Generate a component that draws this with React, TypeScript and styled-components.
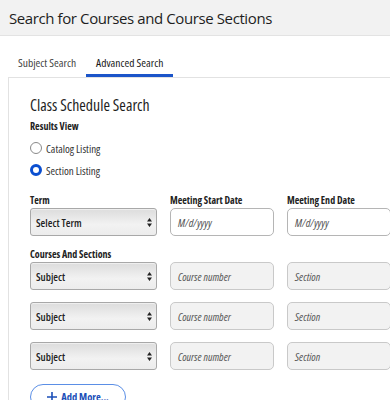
import styled, { createGlobalStyle } from "styled-components";

const GlobalStyle = createGlobalStyle`
  html, body {
    margin: 0;
    padding: 0;
    background: #fff;
    overflow: hidden;
  }
  body {
    font-family: "Open Sans", "Noto Sans", Arial, sans-serif;
    font-stretch: 87.5%;
    color: #222;
  }
`;

const Page = styled.div`
  width: 390px;
  height: 400px;
  overflow: hidden;
`;

const Header = styled.header`
  height: 35px;
  background: #f2f2f2;
  border-bottom: 1px solid #e3e3e3;
  display: flex;
  align-items: center;
  padding-left: 9px;
`;

const Title = styled.h1`
  margin: 0;
  font-size: 15px;
  font-stretch: 100%;
  letter-spacing: -0.4px;
  font-weight: 400;
  color: #1e1e1e;
`;

const TabBar = styled.nav`
  display: flex;
  margin-top: 14px;
  padding-left: 8px;
`;

const Tab = styled.div<{ $active?: boolean }>`
  padding: 0 10px;
  display: flex;
  align-items: center;
  font-size: 11.5px;
  color: ${(p) => (p.$active ? "#1a1a1a" : "#444")};
  border-bottom: 3px solid ${(p) => (p.$active ? "#1b55c9" : "transparent")};
  box-sizing: border-box;
  height: 27px;
`;

const Panel = styled.section`
  margin-left: 8px;
  border-left: 1px solid #e2e2e2;
  border-top: 1px solid #e2e2e2;
  padding: 16px 0 0 21px;
`;

const PanelTitle = styled.h2`
  margin: 0;
  font-size: 15.8px;
  font-weight: 400;
  line-height: 22px;
  color: #1e1e1e;
`;

const Label = styled.div`
  font-size: 10px;
  font-weight: 700;
  color: #222;
  line-height: 12px;
`;

const ResultsLabel = styled(Label)`
  margin-top: 4px;
`;

const RadioGroup = styled.div`
  margin-top: 5px;
  display: flex;
  flex-direction: column;
`;

const RadioRow = styled.label`
  display: flex;
  align-items: center;
  gap: 4px;
  height: 22px;
  font-size: 11px;
  color: #333;
`;

const Radio = styled.span<{ $checked?: boolean }>`
  width: 12px;
  height: 12px;
  border-radius: 50%;
  box-sizing: border-box;
  background: #fff;
  border: ${(p) => (p.$checked ? "3.5px solid #0b4fd0" : "1px solid #8a8a8a")};
`;

const Grid = styled.div`
  display: grid;
  grid-template-columns: 127px 104px 104px;
  column-gap: 13px;
`;

const FieldGroup = styled.div<{ $gap: number }>`
  margin-top: ${(p) => p.$gap}px;
`;

const HeadRow = styled(Grid)`
  height: 12px;
  align-items: center;
`;

const Rows = styled.div`
  display: flex;
  flex-direction: column;
  gap: 12px;
  margin-top: 2px;
`;

const Select = styled.div`
  height: 28px;
  box-sizing: border-box;
  border: 1px solid #a8a8a8;
  border-radius: 3px;
  background: linear-gradient(#dcdcdc, #f2f2f2 60%, #ececec);
  box-shadow: inset 0 1px 1px rgba(255, 255, 255, 0.6);
  display: flex;
  align-items: center;
  justify-content: space-between;
  padding: 0 4px 0 5px;
  font-size: 10.8px;
  font-weight: 600;
  color: #222;
`;

const Input = styled.div<{ $filled?: boolean }>`
  height: 28px;
  box-sizing: border-box;
  border: 1px solid ${(p) => (p.$filled ? "#c9c9c9" : "#b5b5b5")};
  border-radius: 5px;
  background: ${(p) => (p.$filled ? "#f2f2f2" : "#fff")};
  display: flex;
  align-items: center;
  padding-left: 7px;
  font-size: 11px;
  font-style: italic;
  color: #555;
`;

const AddButton = styled.button`
  margin-top: 14px;
  width: 96px;
  height: 26px;
  border: 1px solid #5b8fe6;
  border-radius: 13px;
  background: #fff;
  color: #1b4fb8;
  font-family: inherit;
  font-stretch: inherit;
  font-size: 10.5px;
  font-weight: 700;
  display: flex;
  align-items: center;
  justify-content: center;
  gap: 4px;
  padding: 0;
`;

const Arrows = () => (
  <svg width="5" height="9" viewBox="0 0 5 9">
    <path d="M2.5 0 L5 3.5 H0 Z M2.5 9 L5 5.5 H0 Z" fill="#222" />
  </svg>
);

const Plus = () => (
  <svg width="10" height="10" viewBox="0 0 10 10">
    <path d="M5 0 V10 M0 5 H10" stroke="#1b4fb8" strokeWidth="1.6" />
  </svg>
);

const courseRows = [0, 1, 2];

export default function App() {
  return (
    <Page>
      <GlobalStyle />
      <Header>
        <Title>Search for Courses and Course Sections</Title>
      </Header>
      <TabBar>
        <Tab>Subject Search</Tab>
        <Tab $active>Advanced Search</Tab>
      </TabBar>
      <Panel>
        <PanelTitle>Class Schedule Search</PanelTitle>
        <ResultsLabel>Results View</ResultsLabel>
        <RadioGroup>
          <RadioRow>
            <Radio />
            Catalog Listing
          </RadioRow>
          <RadioRow>
            <Radio $checked />
            Section Listing
          </RadioRow>
        </RadioGroup>

        <FieldGroup $gap={13}>
          <HeadRow>
            <Label>Term</Label>
            <Label>Meeting Start Date</Label>
            <Label>Meeting End Date</Label>
          </HeadRow>
          <Rows>
            <Grid>
              <Select>
                Select Term
                <Arrows />
              </Select>
              <Input>M/d/yyyy</Input>
              <Input>M/d/yyyy</Input>
            </Grid>
          </Rows>
        </FieldGroup>

        <FieldGroup $gap={12}>
          <HeadRow>
            <Label>Courses And Sections</Label>
          </HeadRow>
          <Rows>
            {courseRows.map((i) => (
              <Grid key={i}>
                <Select>
                  Subject
                  <Arrows />
                </Select>
                <Input $filled>Course number</Input>
                <Input $filled>Section</Input>
              </Grid>
            ))}
          </Rows>
        </FieldGroup>

        <AddButton>
          <Plus />
          Add More...
        </AddButton>
      </Panel>
    </Page>
  );
}
